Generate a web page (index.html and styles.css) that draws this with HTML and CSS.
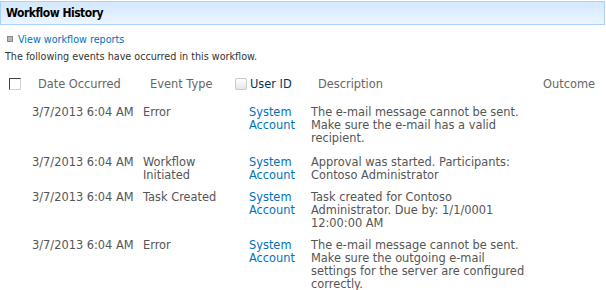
FILE: index.html
```html
<!DOCTYPE html>
<html>
<head>
<meta charset="utf-8">
<link rel="stylesheet" href="styles.css">
</head>
<body>
<div class="page">
  <div class="titlebar"><span class="title">Workflow History</span></div>
  <div class="reports"><span class="bullet"></span><a class="link" href="#">View workflow reports</a></div>
  <div class="intro">The following events have occurred in this workflow.</div>
  <table class="grid">
    <colgroup>
      <col class="w-check">
      <col class="w-date">
      <col class="w-type">
      <col class="w-user">
      <col class="w-desc">
      <col class="w-out">
    </colgroup>
    <thead>
      <tr>
        <th class="h-check"><span class="box"></span></th>
        <th class="h-date">Date Occurred</th>
        <th class="h-type">Event Type</th>
        <th class="h-user"><span class="minibox"></span><span class="uid">User ID</span></th>
        <th class="h-desc">Description</th>
        <th class="h-out">Outcome</th>
      </tr>
    </thead>
    <tbody>
      <tr>
        <td></td>
        <td>3/7/2013 6:04 AM</td>
        <td class="c-type">Error</td>
        <td><a class="link" href="#">System Account</a></td>
        <td>The e-mail message cannot be sent. Make sure the e-mail has a valid recipient.</td>
        <td></td>
      </tr>
      <tr>
        <td></td>
        <td>3/7/2013 6:04 AM</td>
        <td class="c-type">Workflow Initiated</td>
        <td><a class="link" href="#">System Account</a></td>
        <td>Approval was started. Participants: Contoso Administrator</td>
        <td></td>
      </tr>
      <tr>
        <td></td>
        <td>3/7/2013 6:04 AM</td>
        <td class="c-type">Task Created</td>
        <td><a class="link" href="#">System Account</a></td>
        <td>Task created for Contoso Administrator. Due by: 1/1/0001 12:00:00 AM</td>
        <td></td>
      </tr>
      <tr>
        <td></td>
        <td>3/7/2013 6:04 AM</td>
        <td class="c-type">Error</td>
        <td><a class="link" href="#">System Account</a></td>
        <td>The e-mail message cannot be sent. Make sure the outgoing e-mail settings for the server are configured correctly.</td>
        <td></td>
      </tr>
    </tbody>
  </table>
</div>
</body>
</html>
```
FILE: styles.css
```css
html, body {
  margin: 0;
  padding: 0;
  background: #fff;
}
.page {
  width: 606px;
  padding-top: 1px;
  font-family: "DejaVu Sans Condensed", "DejaVu Sans", sans-serif;
  font-size: 10.7px;
  color: #333;
}
.titlebar {
  width: 603px;
  height: 22px;
  border: 1px solid #a9d3fd;
  background: linear-gradient(#d3e7fe, #edf5ff);
  display: flex;
  align-items: center;
}
.title {
  padding-left: 5px;
  font-weight: bold;
  font-size: 12px;
  letter-spacing: -0.5px;
  color: #000;
}
.reports {
  display: flex;
  align-items: center;
  margin-top: 7px;
  height: 14px;
  padding-left: 7px;
}
.bullet {
  width: 4px;
  height: 4px;
  background: #b7b7b7;
  border: 1px solid #8a8a8a;
  margin-right: 5px;
}
.link {
  color: #0072bc;
  text-decoration: none;
}
.intro {
  padding-left: 5px;
  margin-top: 4px;
  height: 14px;
  line-height: 14px;
}
.grid {
  border-collapse: collapse;
  table-layout: fixed;
  margin-top: 10px;
  width: 606px;
  font-family: "DejaVu Sans", sans-serif;
  font-size: 11.4px;
}
.w-check { width: 32px; }
.w-date { width: 111px; }
.w-type { width: 106px; }
.w-user { width: 62px; }
.w-desc { width: 220px; }
.w-out { width: 75px; }
.grid th {
  font-weight: normal;
  color: #666;
  text-align: left;
  height: 20px;
  padding: 0;
  vertical-align: middle;
  white-space: nowrap;
}
.h-check .box {
  display: block;
  margin-left: 9px;
  width: 10px;
  height: 10px;
  border-top: 1px solid #404040;
  border-left: 1px solid #404040;
  border-right: 1px solid #d4d0c8;
  border-bottom: 1px solid #d4d0c8;
  background: #fff;
}
.grid th.h-date { padding-left: 6px; }
.grid th.h-type { padding-left: 7px; }
.h-user .minibox {
  display: inline-block;
  width: 10px;
  height: 10px;
  border: 1px solid #c9c9c9;
  border-radius: 2px;
  background: linear-gradient(#fff, #e6e6e6);
  margin-left: -14px;
  margin-right: 3px;
  vertical-align: -2px;
}
.uid { color: #003759; }
.grid th.h-desc { padding-left: 7px; }
.grid th.h-out { text-align: right; padding-right: 11px; }
.grid td {
  vertical-align: top;
  color: #555;
  line-height: 13px;
  padding: 9px 0 0 0;
}
.grid td.c-type { padding-right: 10px; }
.grid tbody tr:first-child td { padding-top: 12px; padding-bottom: 2px; }
```
